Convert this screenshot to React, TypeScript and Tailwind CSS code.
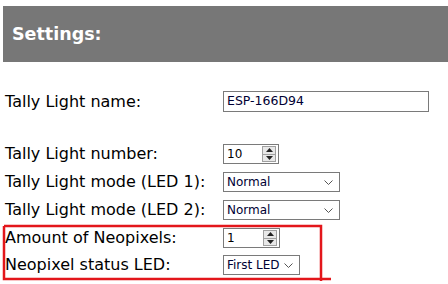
function Spinner() {
  return (
    <div className="flex flex-col w-[14px] h-[16px] border border-[#a0a0a0] bg-[#e8e8e8]">
      <div className="flex-1 flex items-center justify-center border-b border-[#a0a0a0]">
        <svg width="7" height="4" viewBox="0 0 7 4"><path d="M0 4 L3.5 0 L7 4 Z" fill="#222" /></svg>
      </div>
      <div className="flex-1 flex items-center justify-center">
        <svg width="7" height="4" viewBox="0 0 7 4"><path d="M0 0 L3.5 4 L7 0 Z" fill="#222" /></svg>
      </div>
    </div>
  );
}

function NumberBox({ value, w }: { value: string; w: string }) {
  return (
    <div className={`${w} h-[20px] border border-[#7a7a7a] bg-white flex items-center pl-[3px] pr-[2px] justify-between`}>
      <span className="text-[12px] text-black">{value}</span>
      <Spinner />
    </div>
  );
}

function SelectBox({ value, w }: { value: string; w: string }) {
  return (
    <div className={`${w} h-[20px] border border-[#7a7a7a] bg-white flex items-center pl-[3px] pr-[6px] justify-between`}>
      <span className="text-[12px] text-[#000033]">{value}</span>
      <svg width="9" height="5" viewBox="0 0 9 5">
        <path d="M0.5 0.5 L4.5 4.5 L8.5 0.5" fill="none" stroke="#555" strokeWidth="1" />
      </svg>
    </div>
  );
}

function Row({ label, children, h }: { label: string; children: React.ReactNode; h: string }) {
  return (
    <div className={`flex items-center ${h}`}>
      <div className="w-[218px] text-[16px] text-black whitespace-nowrap">{label}</div>
      {children}
    </div>
  );
}

export default function App() {
  return (
    <div
      className="relative w-[448px] h-[284px] bg-white overflow-hidden"
      style={{ fontFamily: '"DejaVu Sans", Verdana, sans-serif' }}
    >
      <div className="mt-[6px] ml-[3px] h-[56px] bg-[#777777] flex items-center pl-[9px]">
        <span className="text-white font-bold text-[17.5px]">Settings:</span>
      </div>
      <div className="pl-[5px] mt-[29px]">
        <Row label="Tally Light name:" h="h-[21px]">
          <div className="w-[206px] h-[21px] border border-[#7a7a7a] bg-white flex items-center pl-[3px]">
            <span className="text-[12.5px] text-[#000033]">ESP-166D94</span>
          </div>
        </Row>
        <div className="h-[32px]" />
        <Row label="Tally Light number:" h="h-[20px]">
          <NumberBox value="10" w="w-[56px]" />
        </Row>
        <div className="h-[8px]" />
        <Row label="Tally Light mode (LED 1):" h="h-[20px]">
          <SelectBox value="Normal" w="w-[117px]" />
        </Row>
        <div className="h-[8px]" />
        <Row label="Tally Light mode (LED 2):" h="h-[20px]">
          <SelectBox value="Normal" w="w-[117px]" />
        </Row>
        <div className="h-[8px]" />
        <Row label="Amount of Neopixels:" h="h-[20px]">
          <NumberBox value="1" w="w-[57px]" />
        </Row>
        <div className="h-[7px]" />
        <Row label="Neopixel status LED:" h="h-[20px]">
          <SelectBox value="First LED" w="w-[77px]" />
        </Row>
      </div>
      <svg className="absolute left-0 top-0 pointer-events-none" width="448" height="284">
        <path
          d="M4 226 L321 226 L321 281 M4 226 L4 279 L331 279"
          fill="none"
          stroke="#e3161b"
          strokeWidth="2.5"
        />
      </svg>
    </div>
  );
}
